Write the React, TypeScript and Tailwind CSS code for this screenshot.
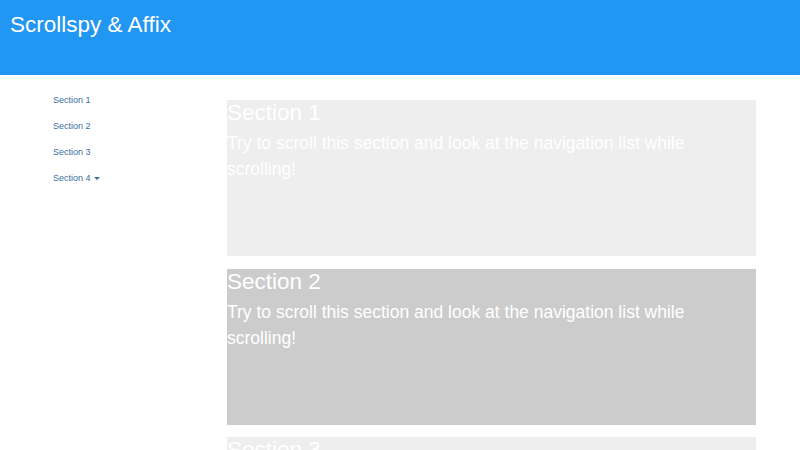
import React from 'react';

const sections = [
  { id: 1, bg: 'bg-[#eeeeee]' },
  { id: 2, bg: 'bg-[#cccccc]' },
  { id: 3, bg: 'bg-[#eeeeee]' },
];

export default function App() {
  return (
    <div className="h-screen overflow-hidden bg-white font-['Liberation_Sans',Arial,sans-serif]">
      {/* Header */}
      <header className="h-[75px] bg-[#2196f3] px-[10px] pt-[11px]">
        <h1 className="text-[22.5px] leading-[28px] text-white">Scrollspy &amp; Affix</h1>
      </header>

      <div className="flex">
        {/* Side nav */}
        <nav className="w-[227px] shrink-0 pl-[53px] pt-[12px]">
          <ul className="flex flex-col">
            {[1, 2, 3].map((n) => (
              <li key={n} className="h-[26px] text-[9px] leading-[26px] text-[#3a6f9f]">
                Section {n}
              </li>
            ))}
            <li className="flex h-[26px] items-center gap-[3px] text-[9px] leading-[26px] text-[#3a6f9f]">
              Section 4
              <span className="mt-[1px] h-0 w-0 border-x-[3px] border-t-[3px] border-x-transparent border-t-[#3a6f9f]" />
            </li>
          </ul>
        </nav>

        {/* Sections */}
        <main className="flex w-[529px] flex-col gap-[12.5px] pt-[25px]">
          {sections.map((s) => (
            <section key={s.id} className={`h-[156px] shrink-0 ${s.bg} text-white`}>
              <h2 className="text-[22.5px] leading-[25px]">Section {s.id}</h2>
              <p className="mt-[5px] text-[17.5px] leading-[26px]">
                Try to scroll this section and look at the navigation list while scrolling!
              </p>
            </section>
          ))}
        </main>
      </div>
    </div>
  );
}
